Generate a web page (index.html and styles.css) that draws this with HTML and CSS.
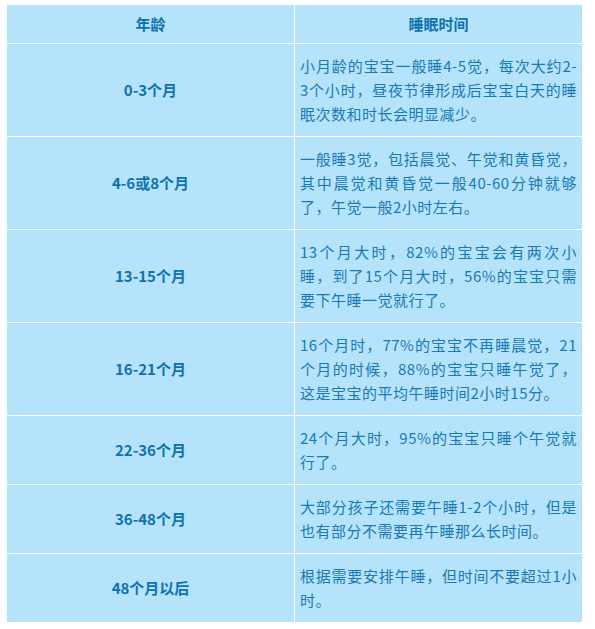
FILE: index.html
```html
<!DOCTYPE html>
<html lang="zh-CN">
<head>
<meta charset="utf-8">
<title>宝宝睡眠时间</title>
<link rel="stylesheet" href="styles.css">
</head>
<body>
<div class="wrap">
<table class="sleep">
  <thead>
    <tr><th>年龄</th><th>睡眠时间</th></tr>
  </thead>
  <tbody>
    <tr><td class="age">0-3个月</td><td class="desc">小月龄的宝宝一般睡4-5觉，每次大约2-3个小时，昼夜节律形成后宝宝白天的睡眠次数和时长会明显减少。</td></tr>
    <tr><td class="age">4-6或8个月</td><td class="desc">一般睡3觉，包括晨觉、午觉和黄昏觉，其中晨觉和黄昏觉一般40-60分钟就够了，午觉一般2小时左右。</td></tr>
    <tr><td class="age">13-15个月</td><td class="desc">13个月大时，82%的宝宝会有两次小睡，到了15个月大时，56%的宝宝只需要下午睡一觉就行了。</td></tr>
    <tr><td class="age">16-21个月</td><td class="desc">16个月时，77%的宝宝不再睡晨觉，21个月的时候，88%的宝宝只睡午觉了，这是宝宝的平均午睡时间2小时15分。</td></tr>
    <tr><td class="age">22-36个月</td><td class="desc">24个月大时，95%的宝宝只睡个午觉就行了。</td></tr>
    <tr><td class="age">36-48个月</td><td class="desc">大部分孩子还需要午睡1-2个小时，但是也有部分不需要再午睡那么长时间。</td></tr>
    <tr><td class="age">48个月以后</td><td class="desc">根据需要安排午睡，但时间不要超过1小时。</td></tr>
  </tbody>
</table>
</div>
</body>
</html>
```
FILE: styles.css
```css
html, body {
  margin: 0;
  padding: 0;
  background: #ffffff;
}
.wrap {
  padding: 4px 0 0 6px;
}
.sleep {
  width: 577px;
  table-layout: fixed;
  border-collapse: separate;
  border-spacing: 1px;
  background: #ffffff;
  font-family: "Noto Sans CJK SC", "Noto Sans", sans-serif;
  font-size: 15px;
  line-height: 24px;
  color: #1476b2;
}
.sleep th,
.sleep td {
  background: #b5e3fb;
  vertical-align: middle;
}
.sleep th {
  height: 24px;
  padding: 7px 5px;
  font-weight: bold;
  text-align: center;
  color: #0f72ae;
}
.sleep td {
  padding: 10px 5px;
}
.sleep .age {
  text-align: center;
  font-weight: bold;
  color: #0f72ae;
}
.sleep .desc {
  text-align: justify;
  letter-spacing: 0.5px;
  word-break: break-all;
  color: #1a79b5;
}
```
